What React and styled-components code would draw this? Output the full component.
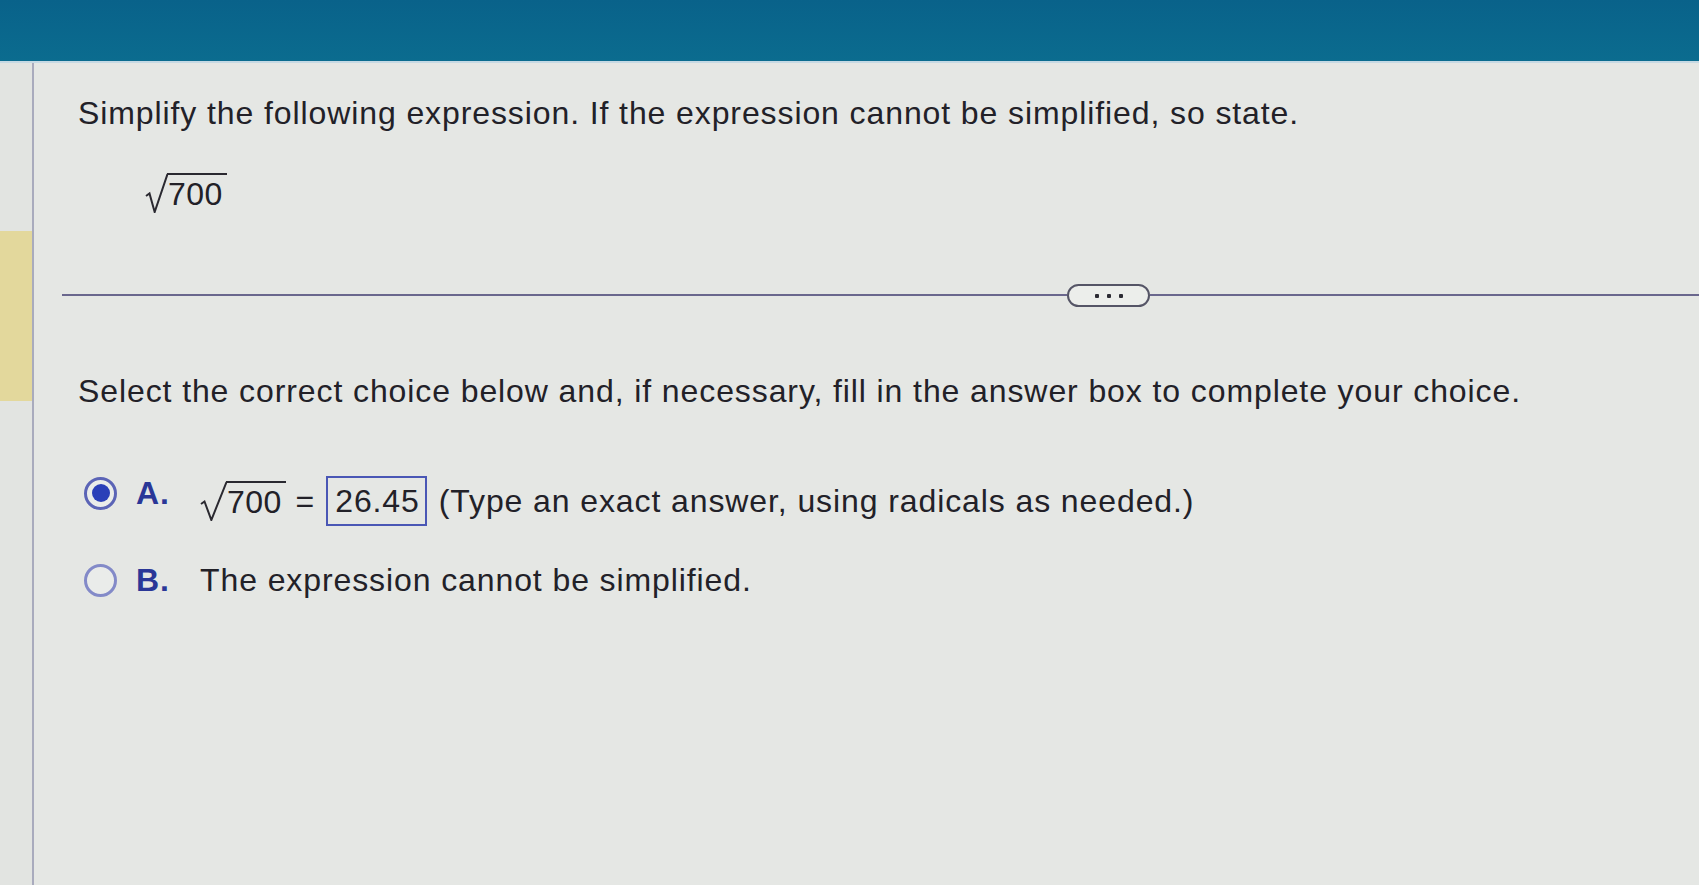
import React from "react";
import styled, { createGlobalStyle } from "styled-components";

const Global = createGlobalStyle`
  html, body { margin: 0; padding: 0; }
  body {
    width: 1699px;
    height: 885px;
    overflow: hidden;
    background: #e5e7e4;
    font-family: "Liberation Sans", Arial, sans-serif;
    color: #222128;
  }
`;

const Page = styled.div`
  display: flex;
  flex-direction: column;
  width: 1699px;
  height: 885px;
`;

const TopBar = styled.div`
  height: 61px;
  background: linear-gradient(180deg, #09628a 0%, #0b6c8f 100%);
  border-bottom: 2px solid #c6d9e3;
  flex-shrink: 0;
`;

const Body = styled.div`
  flex: 1;
  display: flex;
`;

const Rail = styled.div`
  width: 32px;
  flex-shrink: 0;
  background: #e2e4e1;
  border-right: 2px solid #a9abbd;
  display: flex;
  flex-direction: column;
`;

const RailMark = styled.div`
  margin-top: 168px;
  height: 170px;
  background: #e3d89c;
`;

const Main = styled.div`
  flex: 1;
  display: flex;
  flex-direction: column;
  padding-left: 28px;
  letter-spacing: 0.9px;
`;

const Section = styled.div`
  padding-left: 16px;
  padding-top: ${(p) => p.$top || 0}px;
`;

const Text = styled.div`
  font-size: 32px;
  line-height: 38px;
`;

const ExprRow = styled.div`
  margin-top: 41px;
  padding-left: 67px;
  display: flex;
`;

const SqrtWrap = styled.span`
  display: inline-flex;
  align-items: flex-start;
  font-size: 32px;
  line-height: 1;
  letter-spacing: 0.4px;
`;

const Radicand = styled.span`
  border-top: 2px solid #2a2930;
  padding: 3px 4px 0 1px;
  margin-left: -1px;
`;

const Radical = ({ w }) => (
  <svg width={w} height="40" viewBox={`0 0 ${w} 40`} style={{ display: "block" }}>
    <path
      d={`M1 23 L4.5 20.5 L${w * 0.42} 39 L${w - 0.5} 1`}
      fill="none"
      stroke="#2a2930"
      strokeWidth="2"
      strokeLinejoin="miter"
    />
  </svg>
);

const Sqrt = ({ children, w = 23 }) => (
  <SqrtWrap>
    <Radical w={w} />
    <Radicand>{children}</Radicand>
  </SqrtWrap>
);

const DividerRow = styled.div`
  margin-top: 71px;
  display: flex;
  align-items: center;
`;

const Rule = styled.div`
  flex: ${(p) => (p.$grow ? 1 : "none")};
  width: ${(p) => (p.$grow ? "auto" : "1005px")};
  height: 2px;
  margin-top: -2px;
  background: #6a678d;
`;

const Pill = styled.button`
  width: 83px;
  height: 23px;
  border: 2px solid #555566;
  border-radius: 12px;
  background: #eceeeb;
  display: flex;
  align-items: center;
  justify-content: center;
  gap: 8px;
  padding: 0;
`;

const Dot = styled.span`
  width: 4px;
  height: 4px;
  background: #2b2b33;
  border-radius: 1px;
`;

const Choices = styled.div`
  margin-top: 66px;
  display: flex;
  flex-direction: column;
  gap: 29px;
  padding-left: 22px;
`;

const Choice = styled.div`
  display: flex;
  align-items: center;
  font-size: 32px;
  height: 50px;
`;

const RadioCircle = styled.span`
  width: 33px;
  height: 33px;
  box-sizing: border-box;
  border-radius: 50%;
  border: 3px solid ${(p) => (p.$checked ? "#5b64b6" : "#838ac8")};
  display: flex;
  align-items: center;
  justify-content: center;
  flex-shrink: 0;
  background: #eaecea;
  margin-bottom: ${(p) => (p.$raise ? 16 : 0)}px;
`;

const RadioDot = styled.span`
  width: 18px;
  height: 18px;
  border-radius: 50%;
  background: #2a3fb8;
`;

const Letter = styled.span`
  color: #2a3797;
  font-weight: 700;
  margin-left: 19px;
  width: 64px;
  flex-shrink: 0;
  margin-bottom: ${(p) => (p.$raise ? 16 : 0)}px;
`;

const Eq = styled.span`
  margin: 0 11px 0 10px;
`;

const AnswerBox = styled.span`
  border: 2px solid #4a57b5;
  height: 50px;
  box-sizing: border-box;
  padding: 0 5px 0 7px;
  display: inline-flex;
  align-items: center;
  margin-right: 12px;
`;

export default function App() {
  return (
    <>
      <Global />
      <Page>
        <TopBar />
        <Body>
          <Rail>
            <RailMark />
          </Rail>
          <Main>
            <Section $top={31}>
              <Text>Simplify the following expression. If the expression cannot be simplified, so state.</Text>
              <ExprRow>
                <Sqrt>700</Sqrt>
              </ExprRow>
            </Section>
            <DividerRow>
              <Rule />
              <Pill aria-label="more">
                <Dot />
                <Dot />
                <Dot />
              </Pill>
              <Rule $grow />
            </DividerRow>
            <Section $top={65}>
              <Text>Select the correct choice below and, if necessary, fill in the answer box to complete your choice.</Text>
            </Section>
            <Choices>
              <Choice>
                <RadioCircle $checked $raise>
                  <RadioDot />
                </RadioCircle>
                <Letter $raise>A.</Letter>
                <Sqrt w={27}>700</Sqrt>
                <Eq>=</Eq>
                <AnswerBox>26.45</AnswerBox>
                <span>(Type an exact answer, using radicals as needed.)</span>
              </Choice>
              <Choice>
                <RadioCircle />
                <Letter>B.</Letter>
                <span>The expression cannot be simplified.</span>
              </Choice>
            </Choices>
          </Main>
        </Body>
      </Page>
    </>
  );
}
